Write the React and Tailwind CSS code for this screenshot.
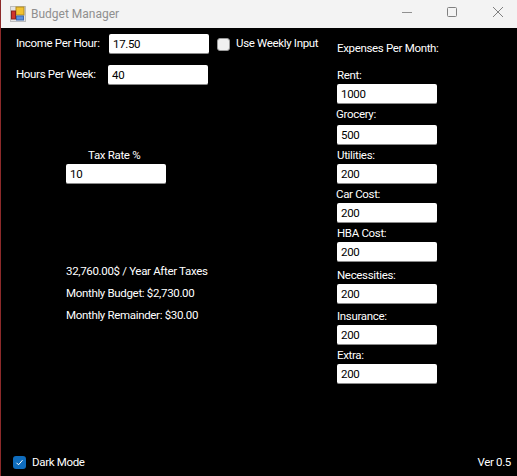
function Field({ value }) {
  return (
    <div className="w-[100px] h-5 shrink-0 bg-white rounded-[2px] border-b border-b-[#8a8a8a] pl-[4px] text-black leading-[20px]">
      {value}
    </div>
  );
}

function Expense({ label, value, labelClass = "leading-[21px]", gap = "" }) {
  return (
    <div className={gap}>
      <div className={`h-[19px] text-white ${labelClass}`}>{label}</div>
      <Field value={value} />
    </div>
  );
}

export default function App() {
  return (
    <div className="w-[517px] h-[476px] overflow-hidden bg-black flex flex-col text-[11.5px] tracking-[-0.33px] text-white font-['Roboto',sans-serif] border-l border-l-[#8c2a2a]">
      <div className="h-[28px] shrink-0 bg-[#f3f3f3] flex items-center">
        <svg width="16" height="16" viewBox="0 0 16 16" className="ml-[9px] shrink-0">
          <rect x="0.5" y="0.5" width="15" height="15" fill="#e4e4e4" stroke="#bdbdbd" />
          <rect x="6" y="1" width="8" height="8" fill="#f2c230" stroke="#b08a20" />
          <rect x="1.5" y="5" width="4" height="8" fill="#d0342c" stroke="#8a2420" />
          <rect x="6.5" y="10" width="7" height="4" fill="#5a8fe0" stroke="#3b68b0" />
        </svg>
        <span className="ml-[5px] text-[12px] tracking-normal text-[#8f8f8f]">Budget Manager</span>
        <div className="ml-auto flex items-center">
          <svg width="46" height="28" viewBox="0 0 46 28"><path d="M23 12.5h10" stroke="#909090" fill="none" /></svg>
          <svg width="46" height="28" viewBox="0 0 46 28"><rect x="22.5" y="7.5" width="9" height="9" rx="1" stroke="#808080" fill="none" /></svg>
          <svg width="46" height="28" viewBox="0 0 46 28"><path d="M22 7l10 10M32 7l-10 10" stroke="#808080" fill="none" /></svg>
        </div>
      </div>

      <div className="flex-1 flex min-h-0">
        <div className="w-[336px] shrink-0">
          <div className="flex items-center mt-[6px] pl-[15px] h-5">
            <span className="w-[93px] whitespace-nowrap">Income Per Hour:</span>
            <Field value="17.50" />
            <span className="ml-[8px] w-[13px] h-[13px] rounded-[3px] bg-[#f0f0f0] border border-[#9a9a9a]" />
            <span className="ml-[6px] whitespace-nowrap">Use Weekly Input</span>
          </div>
          <div className="flex items-center mt-[11px] pl-[15px] h-5">
            <span className="w-[92px] whitespace-nowrap">Hours Per Week:</span>
            <Field value="40" />
          </div>
          <div className="mt-[62px] pl-[65px]">
            <div className="pl-[22px] h-[17px] leading-[17px]">Tax Rate %</div>
            <Field value="10" />
          </div>
          <div className="mt-[79px] pl-[65px] flex flex-col gap-[5px]">
            <div className="h-[17px] leading-[17px]">32,760.00$ / Year After Taxes</div>
            <div className="h-[17px] leading-[17px]">Monthly Budget: $2,730.00</div>
            <div className="h-[17px] leading-[17px]">Monthly Remainder: $30.00</div>
          </div>
        </div>

        <div className="flex-1">
          <div className="mt-[11px] h-[18px] leading-[18px] whitespace-nowrap">Expenses Per Month:</div>
          <Expense label="Rent:" value="1000" gap="mt-[8px]" />
          <Expense label="Grocery:" value="500" gap="mt-[2px]" labelClass="-ml-px leading-[17px]" />
          <Expense label="Utilities:" value="200" />
          <Expense label="Car Cost:" value="200" labelClass="-ml-px leading-[21px]" />
          <Expense label="HBA Cost:" value="200" />
          <Expense label="Necessities:" value="200" gap="mt-[3px]" />
          <Expense label="Insurance:" value="200" gap="mt-[2px]" />
          <Expense label="Extra:" value="200" />
        </div>
      </div>

      <div className="h-[26px] shrink-0 flex items-center pl-[12px] pr-[6px] pb-[1px]">
        <span className="w-[13px] h-[13px] rounded-[3px] bg-[#0f6cbd] flex items-center justify-center">
          <svg width="9" height="9" viewBox="0 0 9 9"><path d="M1.5 4.8l2 2 4-4.6" stroke="#fff" fill="none" /></svg>
        </span>
        <span className="ml-[6px]">Dark Mode</span>
        <span className="ml-auto">Ver 0.5</span>
      </div>
    </div>
  );
}
